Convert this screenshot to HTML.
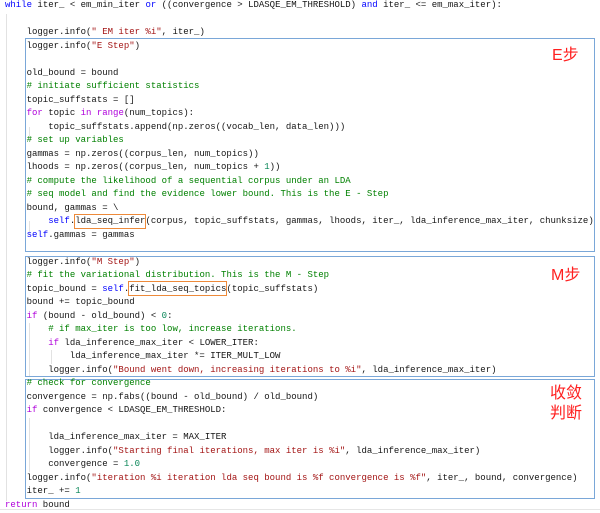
<!DOCTYPE html>
<html><head><meta charset="utf-8"><style>
html,body{margin:0;padding:0;background:#fff;width:600px;height:513px;overflow:hidden;position:relative}
pre{position:absolute;left:5px;top:-1px;margin:0;font-family:"Liberation Mono",monospace;font-size:9px;line-height:13.5px;color:#151515;z-index:2}
.k{color:#0000ff}.p{color:#af00db}.s{color:#a31515}.c{color:#008000}.n{color:#098658}
.box{position:absolute;border:1.5px solid #7aa7d8;box-sizing:border-box;left:25px;width:570px}
.ob{position:absolute;border:1px solid #ed8a3a;box-sizing:border-box;z-index:3}
.lab{position:absolute;color:#ff2020;font-family:"Liberation Sans","Noto Sans CJK SC",sans-serif;font-size:16px;line-height:20px}
.g{position:absolute;width:1px;background:#e2e2e2}
</style></head><body>
<div class="g" style="left:6px;top:14px;height:487px"></div>
<div class="g" style="left:29px;top:127px;height:14px"></div>
<div class="g" style="left:29px;top:221px;height:14px"></div>
<div class="g" style="left:29px;top:323px;height:54px"></div>
<div class="g" style="left:51px;top:350px;height:14px"></div>
<div class="g" style="left:29px;top:418px;height:54px"></div>
<div class="box" style="top:38px;height:214px"></div>
<div class="box" style="top:256px;height:121px"></div>
<div class="box" style="top:379px;height:120px"></div>
<div class="ob" style="left:74px;top:214px;width:72px;height:15px"></div>
<div class="ob" style="left:128px;top:281px;width:99px;height:15px"></div>
<div class="lab" style="left:552px;top:46px">E步</div>
<div class="lab" style="left:551px;top:266px">M步</div>
<div class="lab" style="left:550px;top:384px">收敛<br>判断</div>
<div style="position:absolute;left:0;top:509px;width:600px;height:1px;background:#e6e6e6"></div>
<pre><span class="k">while</span> iter_ &lt; em_min_iter <span class="k">or</span> ((convergence &gt; LDASQE_EM_THRESHOLD) <span class="k">and</span> iter_ &lt;= em_max_iter):

    logger.info(<span class="s">" EM iter %i"</span>, iter_)
    logger.info(<span class="s">"E Step"</span>)

    old_bound = bound
    <span class="c"># initiate sufficient statistics</span>
    topic_suffstats = []
    <span class="p">for</span> topic <span class="p">in</span> <span class="p">range</span>(num_topics):
        topic_suffstats.append(np.zeros((vocab_len, data_len)))
    <span class="c"># set up variables</span>
    gammas = np.zeros((corpus_len, num_topics))
    lhoods = np.zeros((corpus_len, num_topics + <span class="n">1</span>))
    <span class="c"># compute the likelihood of a sequential corpus under an LDA</span>
    <span class="c"># seq model and find the evidence lower bound. This is the E - Step</span>
    bound, gammas = \
        <span class="k">self</span>.lda_seq_infer(corpus, topic_suffstats, gammas, lhoods, iter_, lda_inference_max_iter, chunksize)
    <span class="k">self</span>.gammas = gammas

    logger.info(<span class="s">"M Step"</span>)
    <span class="c"># fit the variational distribution. This is the M - Step</span>
    topic_bound = <span class="k">self</span>.fit_lda_seq_topics(topic_suffstats)
    bound += topic_bound
    <span class="p">if</span> (bound - old_bound) &lt; <span class="n">0</span>:
        <span class="c"># if max_iter is too low, increase iterations.</span>
        <span class="p">if</span> lda_inference_max_iter &lt; LOWER_ITER:
            lda_inference_max_iter *= ITER_MULT_LOW
        logger.info(<span class="s">"Bound went down, increasing iterations to %i"</span>, lda_inference_max_iter)
    <span class="c"># check for convergence</span>
    convergence = np.fabs((bound - old_bound) / old_bound)
    <span class="p">if</span> convergence &lt; LDASQE_EM_THRESHOLD:

        lda_inference_max_iter = MAX_ITER
        logger.info(<span class="s">"Starting final iterations, max iter is %i"</span>, lda_inference_max_iter)
        convergence = <span class="n">1.0</span>
    logger.info(<span class="s">"iteration %i iteration lda seq bound is %f convergence is %f"</span>, iter_, bound, convergence)
    iter_ += <span class="n">1</span>
<span class="p">return</span> bound</pre>
</body></html>
